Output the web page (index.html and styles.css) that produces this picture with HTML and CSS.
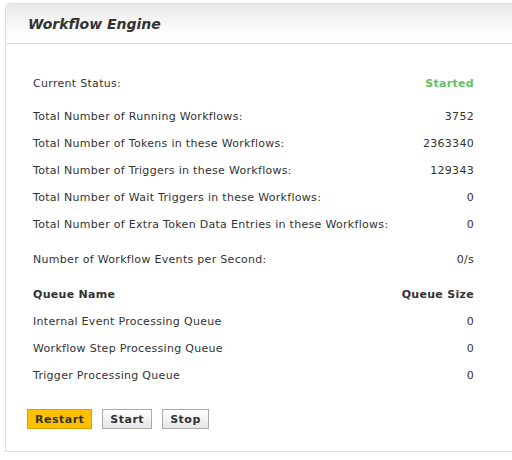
FILE: index.html
```html
<!DOCTYPE html>
<html lang="en">
  <head>
    <meta charset="UTF-8" />
    <title>Workflow Engine</title>
    <link rel="stylesheet" href="styles.css">
  </head>
  <body>
    <div class="panel">
      <div class="panel-header">
        <h2>Workflow Engine</h2>
      </div>
      <div class="panel-body">
        <div class="row status">
          <span>Current Status:</span>
          <span class="started">Started</span>
        </div>
        <div class="row">
          <span>Total Number of Running Workflows:</span>
          <span>3752</span>
        </div>
        <div class="row">
          <span>Total Number of Tokens in these Workflows:</span>
          <span>2363340</span>
        </div>
        <div class="row">
          <span>Total Number of Triggers in these Workflows:</span>
          <span>129343</span>
        </div>
        <div class="row">
          <span>Total Number of Wait Triggers in these Workflows:</span>
          <span>0</span>
        </div>
        <div class="row">
          <span>Total Number of Extra Token Data Entries in these Workflows:</span>
          <span>0</span>
        </div>
        <div class="row spaced">
          <span>Number of Workflow Events per Second:</span>
          <span>0/s</span>
        </div>
        <div class="row spaced head">
          <span>Queue Name</span>
          <span>Queue Size</span>
        </div>
        <div class="row">
          <span>Internal Event Processing Queue</span>
          <span>0</span>
        </div>
        <div class="row">
          <span>Workflow Step Processing Queue</span>
          <span>0</span>
        </div>
        <div class="row">
          <span>Trigger Processing Queue</span>
          <span>0</span>
        </div>

        <div class="actions">
          <button class="btn primary">Restart</button>
          <button class="btn">Start</button>
          <button class="btn">Stop</button>
        </div>
      </div>
    </div>
  </body>
</html>
```

FILE: styles.css
```css
body {
  margin: 0;
  background: #fff;
  font-family: "DejaVu Sans", Verdana, sans-serif;
  font-size: 11px;
  color: #333;
}

.panel {
  margin: 3px 0 0 5px;
  border: 1px solid #ddd;
  border-right: none;
  border-radius: 5px 0 0 0;
  height: 449px;
  box-sizing: border-box;
}

.panel-header {
  height: 39px;
  border-bottom: 1px solid #ddd;
  background: linear-gradient(to bottom, #e8e8e8 0%, #fafafa 60%, #fff 100%);
  border-radius: 5px 0 0 0;
  display: flex;
  align-items: center;
}

.panel-header h2 {
  margin: 0 0 0 22px;
  font-size: 14px;
  font-style: italic;
  font-weight: bold;
  color: #333;
}

.panel-body {
  padding: 26px 0 0 27px;
  width: 441px;
  letter-spacing: 0.3px;
}

.row {
  display: flex;
  justify-content: space-between;
  align-items: center;
  height: 27px;
}

.row.status {
  margin-bottom: 6px;
}

.row.spaced {
  margin-top: 8px;
}

.row.head {
  font-weight: bold;
}

.started {
  color: #62c462;
  font-weight: bold;
}

.actions {
  display: flex;
  gap: 10px;
  margin: 20px 0 0 -6px;
}

.btn {
  font-family: "DejaVu Sans", Verdana, sans-serif;
  font-size: 11px;
  font-weight: bold;
  letter-spacing: 0.5px;
  color: #333;
  height: 20px;
  padding: 0 7px;
  border: 1px solid #aaa;
  background: linear-gradient(to bottom, #fff 0%, #e6e6e6 100%);
}

.btn.primary {
  background: #ffc000;
  border-color: #dca200;
}
```
